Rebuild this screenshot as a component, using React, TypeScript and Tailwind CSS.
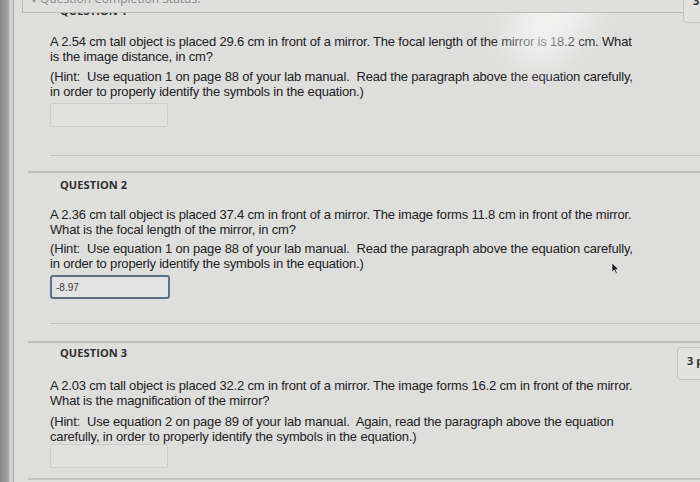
import React from 'react';

type Question = {
  num: number;
  body: string[];
  hint: string[];
  answer?: string;
};

const questions: Question[] = [
  {
    num: 1,
    body: [
      'A 2.54 cm tall object is placed 29.6 cm in front of a mirror. The focal length of the mirror is 18.2 cm. What',
      'is the image distance, in cm?',
    ],
    hint: [
      '(Hint:  Use equation 1 on page 88 of your lab manual.  Read the paragraph above the equation carefully,',
      'in order to properly identify the symbols in the equation.)',
    ],
  },
  {
    num: 2,
    body: [
      'A 2.36 cm tall object is placed 37.4 cm in front of a mirror. The image forms 11.8 cm in front of the mirror.',
      'What is the focal length of the mirror, in cm?',
    ],
    hint: [
      '(Hint:  Use equation 1 on page 88 of your lab manual.  Read the paragraph above the equation carefully,',
      'in order to properly identify the symbols in the equation.)',
    ],
    answer: '-8.97',
  },
  {
    num: 3,
    body: [
      'A 2.03 cm tall object is placed 32.2 cm in front of a mirror. The image forms 16.2 cm in front of the mirror.',
      'What is the magnification of the mirror?',
    ],
    hint: [
      '(Hint:  Use equation 2 on page 89 of your lab manual.  Again, read the paragraph above the equation',
      'carefully, in order to properly identify the symbols in the equation.)',
    ],
  },
];

const Lines = ({ lines }: { lines: string[] }) => (
  <p className="leading-[15px] whitespace-pre">
    {lines.map((l, i) => (
      <span key={i} className="block">
        {l}
      </span>
    ))}
  </p>
);

// points badge sits at the right edge, partly off screen
const PointsBox = ({ className }: { className: string }) => (
  <div
    className={`float-right h-[33px] w-[70px] whitespace-nowrap rounded-sm border border-[#c4c4c4] bg-[#e2e2e1] pl-[9px] font-['Open_Sans',sans-serif] text-[11px] font-bold leading-[14px] text-[#333] ${className}`}
  >
    3 points
  </div>
);

const QuestionBlock = ({ q }: { q: Question }) => {
  const wrap =
    q.num === 1 ? 'mt-[-2px] pt-[6px]' : q.num === 2 ? 'border-t-2 border-[#bcbcbb] pt-[5px]' : 'border-t-2 border-[#bcbcbb] pt-[3px]';
  const bodyGap = q.num === 1 ? 'mt-[16px]' : q.num === 2 ? 'mt-[15px]' : 'mt-[18px]';
  const hintGap = q.num === 1 ? 'mt-[5px]' : q.num === 2 ? 'mt-[4px]' : 'mt-[6px]';
  const inputGap = q.num === 3 ? 'mt-0' : 'mt-[4px]';
  const lineGap = q.num === 1 ? 'mt-[28px] mb-[15px]' : 'mt-[24px] mb-[17px]';

  return (
    <section className={wrap}>
      {q.num === 1 && <PointsBox className="mr-[-53px] mt-[-14px] pt-[3px]" />}
      {q.num === 3 && <PointsBox className="mr-[-47px] mt-[1px] pt-[6px]" />}
      <div className="pl-[22px]">
        <h3 className="pl-[10px] font-['Open_Sans',sans-serif] text-[11px] font-bold leading-[14px] tracking-[0.1px] text-[#2e2e2e]">
          QUESTION {q.num}
        </h3>
        <div className="font-['Liberation_Sans',Arial,sans-serif] text-[13px] tracking-[-0.17px] text-[#222]">
          <div className={bodyGap}>
            <Lines lines={q.body} />
          </div>
          <div className={hintGap}>
            <Lines lines={q.hint} />
          </div>
        </div>
        <div className={inputGap}>
          {q.answer ? (
            <div className="flex h-[24px] w-[120px] items-center rounded-[3px] border-2 border-[#5d6f82] bg-[#e3e3e3] pl-[4px] font-['Liberation_Sans',Arial,sans-serif] text-[10px] text-[#3c3c3c]">
              {q.answer}
            </div>
          ) : (
            <div className="h-[24px] w-[118px] rounded-[2px] border border-[#cdcdcc] bg-[#e1e1e0]" />
          )}
        </div>
        {q.num !== 3 && <div className={`${lineGap} h-[1px] bg-[#c3c3c2]`} />}
      </div>
    </section>
  );
};

export default function App() {
  return (
    <div className="relative flex h-[482px] w-[700px] overflow-hidden bg-[#dededd]">
      <div className="w-[9px] shrink-0 bg-gradient-to-r from-[#858585] to-[#a8a8a8]" />
      <div className="w-[5px] shrink-0 border-r border-[#a7a7a7] bg-[#d0d0cf]" />
      <main className="relative flex-1 pl-[14px]">
        <div className="absolute left-[8px] right-[17px] top-[-9px] z-10 h-[22px] border-b border-l border-[#b9b9b8] bg-[#dfdfde] pl-[8px] font-['Open_Sans',sans-serif] text-[12px] leading-[16px] text-[#8a8a8a]">
          ▾ Question Completion Status:
        </div>
        <QuestionBlock q={questions[0]} />
        <QuestionBlock q={questions[1]} />
        <QuestionBlock q={questions[2]} />
        <div className="mt-[10px] h-[2px] bg-[#c4c4c3]" />
        {/* mouse pointer */}
        <svg
          className="absolute left-[597px] top-[262px]"
          width="9"
          height="12"
          viewBox="0 0 9 12"
        >
          <path d="M1 1 L1 10 L3.2 8 L5 11.5 L6.3 10.9 L4.6 7.5 L7.6 7.5 Z" fill="#1a1a1a" stroke="#f2f2f2" strokeWidth="0.6" />
        </svg>
        {/* screen glare */}
        <div className="pointer-events-none absolute left-[510px] top-[-40px] h-[110px] w-[60px] rotate-[38deg] rounded-full bg-white/60 blur-[16px]" />
      </main>
    </div>
  );
}
